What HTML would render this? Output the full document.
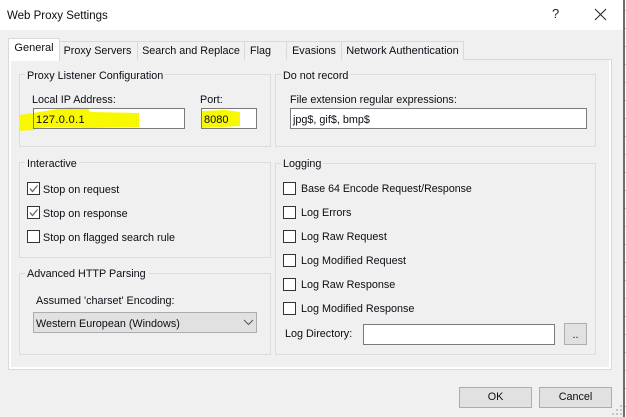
<!DOCTYPE html>
<html><head><meta charset="utf-8"><style>
html,body{margin:0;padding:0;width:626px;height:417px;overflow:hidden;background:#fff}
body{position:relative;font-family:"Liberation Sans",sans-serif;font-size:10.8px;color:#0c0c14}
div{position:absolute;box-sizing:border-box}
.t{white-space:nowrap;line-height:14px;height:14px;margin-top:1px}
.g{border:1px solid #dcdcdc}
.l{background:#f0f0f0;padding:0 2px}
.i{background:#fff;border:1px solid #7a7a7a}
.c{width:13px;height:13px;background:#fff;border:1px solid #333}
.tab{top:41px;height:19px;background:#f0f0f0;border:1px solid #d9d9d9;border-bottom:0;text-align:center;line-height:18px;white-space:nowrap}
.b{background:#e1e1e1;border:1px solid #adadad;text-align:center;white-space:nowrap}
</style></head><body>
<div style="left:0;top:30px;width:623px;height:387px;background:#f0f0f0"></div>
<div style="left:623px;top:0;width:2px;height:417px;background:#6d6d6d"></div>
<svg style="position:absolute;left:625px;top:0" width="1" height="417"><path d="M0 10v1M0 28v1M0 46v1M0 64v1M0 82v1M0 100v1M0 118v1M0 136v1M0 154v1M0 172v1M0 190v1M0 208v1M0 226v1M0 244v1M0 262v1M0 280v1M0 298v1M0 316v1M0 334v1M0 352v1M0 370v1M0 388v1M0 406v1" stroke="#777"/></svg>
<div class="t" style="left:7px;top:8px;font-size:11.5px">Web Proxy Settings</div>
<div class="t" style="left:552px;top:6px;font-size:13px;color:#222">?</div>
<svg style="position:absolute;left:594px;top:8px" width="13" height="13"><path d="M1 1L12 12M12 1L1 12" stroke="#222" fill="none"/></svg>

<div style="left:8px;top:59px;width:604px;height:311px;background:#fff;border:1px solid #d9d9d9"></div>
<div style="left:11px;top:60px;width:598px;height:307px;background:#f0f0f0"></div>

<div class="tab" style="left:59px;width:79px;padding-right:2px">Proxy Servers</div>
<div class="tab" style="left:137px;width:108px">Search and Replace</div>
<div class="tab" style="left:244px;width:43px;text-align:left;padding-left:5px">Flag</div>
<div class="tab" style="left:286px;width:56px">Evasions</div>
<div class="tab" style="left:341px;width:123px;font-size:11px">Network Authentication</div>
<div style="left:8px;top:38px;width:52px;height:23px;background:#fff;border:1px solid #d9d9d9;border-bottom:0;text-align:center;line-height:19px;z-index:2;font-size:11px">General</div>

<div class="g" style="left:19px;top:74px;width:252px;height:73px"></div>
<div class="t l" style="left:25px;top:68px">Proxy Listener Configuration</div>
<div class="t" style="left:32px;top:92px">Local IP Address:</div>
<div class="t" style="left:200px;top:92px">Port:</div>
<div class="i" style="left:33px;top:108px;width:152px;height:21px"></div>
<div class="i" style="left:201px;top:108px;width:56px;height:21px"></div>
<svg style="position:absolute;left:0;top:0" width="300" height="140"><path d="M20 115L33 113 70 107 88 108 90 112 139 113 139 127 90 128 45 127 33 130 19 131Z" fill="#f8f800"/><path d="M202 111L225 110 240 112 240 126 222 127 202 128Z" fill="#f8f800"/><path d="M33 108H185V129H33ZM34 109V128H184V109Z M201 108H257V129H201ZM202 109V128H256V109Z" fill="#7a7a7a" fill-rule="evenodd"/></svg>
<div class="t" style="left:36px;top:112px;letter-spacing:.35px;font-size:11px">127.0.0.1</div>
<div class="t" style="left:204px;top:112px;font-size:11px">8080</div>

<div class="g" style="left:275px;top:74px;width:321px;height:73px"></div>
<div class="t l" style="left:281px;top:68px">Do not record</div>
<div class="t" style="left:290px;top:92px">File extension regular expressions:</div>
<div class="i" style="left:290px;top:108px;width:297px;height:21px"></div>
<div class="t" style="left:293px;top:112px">jpg$, gif$, bmp$</div>

<div class="g" style="left:19px;top:162px;width:252px;height:96px"></div>
<div class="t l" style="left:25px;top:156px">Interactive</div>
<div class="c" style="left:27px;top:182px"></div><div class="t" style="left:43px;top:182px">Stop on request</div>
<div class="c" style="left:27px;top:206px"></div><div class="t" style="left:43px;top:206px">Stop on response</div>
<div class="c" style="left:27px;top:230px"></div><div class="t" style="left:43px;top:230px">Stop on flagged search rule</div>
<svg style="position:absolute;left:27px;top:182px" width="13" height="37"><path d="M3 6.5L5.5 9.5 10.5 3.5M3 30.5L5.5 33.5 10.5 27.5" stroke="#666" stroke-width="1.3" fill="none"/></svg>

<div class="g" style="left:19px;top:273px;width:252px;height:82px"></div>
<div class="t l" style="left:25px;top:266px">Advanced HTTP Parsing</div>
<div class="t" style="left:36px;top:293px">Assumed 'charset' Encoding:</div>
<div class="b" style="left:33px;top:312px;width:224px;height:21px"></div>
<div class="t" style="left:36px;top:316px">Western European (Windows)</div>
<svg style="position:absolute;left:243px;top:319px" width="11" height="7"><path d="M1 1L5.5 5.5 10 1" stroke="#555" fill="none"/></svg>

<div class="g" style="left:275px;top:163px;width:321px;height:192px"></div>
<div class="t l" style="left:281px;top:156px">Logging</div>
<div class="c" style="left:283px;top:182px"></div><div class="t" style="left:301px;top:181px;font-size:10.6px">Base 64 Encode Request/Response</div>
<div class="c" style="left:283px;top:206px"></div><div class="t" style="left:301px;top:205px">Log Errors</div>
<div class="c" style="left:283px;top:230px"></div><div class="t" style="left:301px;top:229px">Log Raw Request</div>
<div class="c" style="left:283px;top:254px"></div><div class="t" style="left:301px;top:253px">Log Modified Request</div>
<div class="c" style="left:283px;top:278px"></div><div class="t" style="left:301px;top:277px">Log Raw Response</div>
<div class="c" style="left:283px;top:302px"></div><div class="t" style="left:301px;top:301px">Log Modified Response</div>
<div class="t" style="left:285px;top:326px">Log Directory:</div>
<div class="i" style="left:363px;top:324px;width:192px;height:21px"></div>
<div class="b" style="left:564px;top:323px;width:23px;height:22px;line-height:22px">..</div>

<div class="b" style="left:459px;top:387px;width:73px;height:21px;line-height:19px">OK</div>
<div class="b" style="left:539px;top:387px;width:73px;height:21px;line-height:19px">Cancel</div>
<svg style="position:absolute;left:612px;top:404px" width="11" height="11"><path d="M8 1h2v2h-2zM4 5h2v2h-2zM8 5h2v2h-2zM0 9h2v2h-2zM4 9h2v2h-2zM8 9h2v2h-2z" fill="#c4c4c4"/></svg>
</body></html>
